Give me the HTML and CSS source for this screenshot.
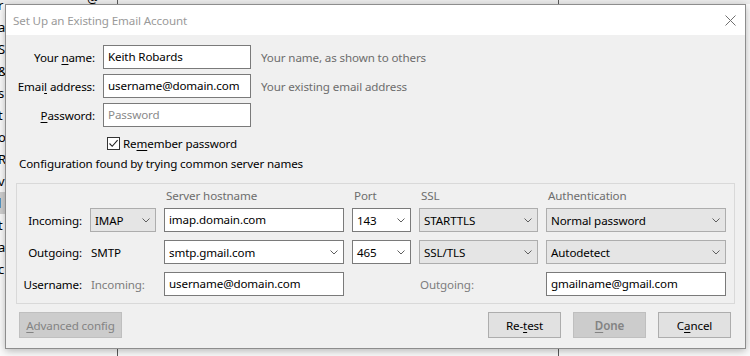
FILE: index.html
```html
<!DOCTYPE html>
<html lang="en">
<head>
    <meta charset="UTF-8">
    <title>Set Up an Existing Email Account</title>
    <link rel="stylesheet" href="styles.css">
</head>
<body>
    <!-- the mail window behind the dialog -->
    <div class="backdrop">
        <div class="folder-list">
            <span>r</span><span>a</span><span>Se</span><span>&amp;</span><span>s</span><span>t</span><span>o</span>
            <span>R</span><span>v</span><span class="sel">l</span><span>t</span><span>a</span><span>c</span>
        </div>
        <span class="back-glyph">@</span>
        <div class="splitter left"></div>
        <div class="splitter right"></div>
    </div>

    <div class="dialog">
        <div class="titlebar">
            <span>Set Up an Existing Email Account</span>
            <svg class="close" width="11" height="11" viewBox="0 0 11 11">
                <path d="M0.5 0.5 L10.5 10.5 M10.5 0.5 L0.5 10.5" stroke="#6f6f6f" stroke-width="1" fill="none"/>
            </svg>
        </div>

        <div class="dlg-body">
            <div class="account">
                <span class="lbl">Your <u>n</u>ame:</span>
                <div class="field">Keith Robards</div>
                <span class="hint">Your name, as shown to others</span>

                <span class="lbl">Emai<u>l</u> address:</span>
                <div class="field">username@domain.com</div>
                <span class="hint">Your existing email address</span>

                <span class="lbl"><u>P</u>assword:</span>
                <div class="field placeholder">Password</div>
                <span></span>
            </div>

            <div class="remember">
                <span class="check">
                    <svg width="11" height="11" viewBox="0 0 11 11">
                        <path d="M1.5 5.5 L4.2 8.3 L9.6 2.2" stroke="#222" stroke-width="1.1" fill="none"/>
                    </svg>
                </span>
                Re<u>m</u>ember password
            </div>

            <p class="status">Configuration found by trying common server names</p>

            <div class="servers">
                <div class="srv-grid srv-head">
                    <span></span><span></span>
                    <span>Server hostname</span>
                    <span>Port</span>
                    <span>SSL</span>
                    <span>Authentication</span>
                </div>
                <div class="srv-grid srv-rows">
                    <span class="lbl">Incoming:</span>
                    <div class="combo">IMAP <svg class="chev" width="8" height="5" viewBox="0 0 8 5"><path d="M0.5 0.5 L4 4 L7.5 0.5" /></svg></div>
                    <div class="field">imap.domain.com</div>
                    <div class="combo edit">143 <svg class="chev" width="8" height="5" viewBox="0 0 8 5"><path d="M0.5 0.5 L4 4 L7.5 0.5" /></svg></div>
                    <div class="combo">STARTTLS <svg class="chev" width="8" height="5" viewBox="0 0 8 5"><path d="M0.5 0.5 L4 4 L7.5 0.5" /></svg></div>
                    <div class="combo">Normal password <svg class="chev" width="8" height="5" viewBox="0 0 8 5"><path d="M0.5 0.5 L4 4 L7.5 0.5" /></svg></div>

                    <span class="lbl">Outgoing:</span>
                    <span class="plain">SMTP</span>
                    <div class="combo edit">smtp.gmail.com <svg class="chev" width="8" height="5" viewBox="0 0 8 5"><path d="M0.5 0.5 L4 4 L7.5 0.5" /></svg></div>
                    <div class="combo edit">465 <svg class="chev" width="8" height="5" viewBox="0 0 8 5"><path d="M0.5 0.5 L4 4 L7.5 0.5" /></svg></div>
                    <div class="combo">SSL/TLS <svg class="chev" width="8" height="5" viewBox="0 0 8 5"><path d="M0.5 0.5 L4 4 L7.5 0.5" /></svg></div>
                    <div class="combo">Autodetect <svg class="chev" width="8" height="5" viewBox="0 0 8 5"><path d="M0.5 0.5 L4 4 L7.5 0.5" /></svg></div>

                    <span class="lbl">Username:</span>
                    <span class="plain dim">Incoming:</span>
                    <div class="field">username@domain.com</div>
                    <span></span>
                    <span class="plain dim">Outgoing:</span>
                    <div class="field">gmailname@gmail.com</div>
                </div>
            </div>

            <div class="actions">
                <div class="btn adv disabled"><u>A</u>dvanced config</div>
                <div class="btn">Re-<u>t</u>est</div>
                <div class="btn disabled bold"><u>D</u>one</div>
                <div class="btn">C<u>a</u>ncel</div>
            </div>
        </div>
    </div>
</body>
</html>
```

FILE: styles.css
```css
body {
    margin: 0;
    width: 750px;
    height: 356px;
    overflow: hidden;
    position: relative;
    background-color: #f7f7f7;
    font-family: "Noto Sans", sans-serif;
    font-size: 11.6px;
    letter-spacing: -0.12px;
    color: #000;
}
u {
    text-underline-offset: 2px;
}

/* background window */
.backdrop {
    position: absolute;
    inset: 0;
    background: linear-gradient(#ececec 0, #ececec 4px, #fbfbfb 4px);
}
.folder-list {
    position: absolute;
    left: -2px;
    top: -6px;
    display: flex;
    flex-direction: column;
    line-height: 22px;
    font-size: 13px;
}
.folder-list .sel {
    background-color: #d0d0d0;
    padding-right: 10px;
}
.back-glyph {
    position: absolute;
    left: 87px;
    top: -11px;
    font-size: 13px;
}
.splitter {
    position: absolute;
    top: 0;
    bottom: 0;
    width: 1px;
    background-color: #5a5a5a;
}
.splitter.left { left: 117px; }
.splitter.right { left: 558px; }

/* dialog window */
.dialog {
    position: absolute;
    left: 5px;
    top: 4px;
    width: 739px;
    border: 1px solid #8d8d8d;
    background-color: #f0f0f0;
    box-shadow: 0 2px 8px rgba(0,0,0,0.28);
}
.titlebar {
    height: 30px;
    background-color: #fff;
    display: flex;
    align-items: center;
    justify-content: space-between;
    padding: 0 9px 0 7px;
    color: #9a9a9a;
}
.dlg-body {
    padding: 10px 0 10px;
}

.account {
    display: grid;
    grid-template-columns: 89px 148px 1fr;
    grid-auto-rows: 24px;
    column-gap: 8px;
    row-gap: 5px;
    align-items: center;
}
.lbl {
    text-align: right;
}
.field {
    height: 24px;
    box-sizing: border-box;
    border: 1px solid #7a7a7a;
    background-color: #fff;
    padding: 0 4px;
    line-height: 22px;
    white-space: nowrap;
    overflow: hidden;
}
.field.placeholder {
    color: #8a8a8a;
}
.hint {
    color: #6d6d6d;
    padding-left: 2px;
}

.remember {
    display: flex;
    align-items: center;
    height: 16px;
    margin: 8px 0 0 101px;
}
.check {
    width: 13px;
    height: 13px;
    box-sizing: border-box;
    border: 1px solid #333;
    background-color: #fff;
    display: flex;
    align-items: center;
    justify-content: center;
    margin-right: 3px;
}
.status {
    margin: 5px 0 0 13px;
    line-height: 16px;
}

.servers {
    margin: 11px 10px 0;
    border: 1px solid #d9d9d9;
    padding: 4px 6px 7px 0;
}
.srv-grid {
    display: grid;
    grid-template-columns: 65px 66px 180px 59px 119px 180px;
    column-gap: 8px;
}
.srv-head {
    height: 16px;
    line-height: 16px;
    color: #6d6d6d;
    margin-bottom: 4px;
}
.srv-head span {
    padding-left: 2px;
}
.srv-rows {
    grid-auto-rows: 24px;
    row-gap: 8px;
    align-items: center;
}
.plain {
    padding-left: 1px;
}
.plain.dim {
    color: #7d7d7d;
}
.combo {
    height: 24px;
    box-sizing: border-box;
    border: 1px solid #adadad;
    background-color: #e5e5e5;
    display: flex;
    align-items: center;
    justify-content: space-between;
    padding: 0 5px 0 4px;
    white-space: nowrap;
}
.combo.edit {
    background-color: #fff;
    border-color: #7a7a7a;
}
.chev path {
    stroke: #5f5f5f;
    stroke-width: 1;
    fill: none;
}

.actions {
    display: flex;
    gap: 12px;
    margin: 8px 14px 0 13px;
}
.btn {
    width: 73px;
    height: 26px;
    box-sizing: border-box;
    border: 1px solid #adadad;
    background-color: #e1e1e1;
    display: flex;
    align-items: center;
    justify-content: center;
}
.btn.adv {
    width: 103px;
    margin-right: auto;
}
.btn.disabled {
    background-color: #cccccc;
    border-color: #bfbfbf;
    color: #838383;
}
.btn.bold {
    font-weight: 600;
}
```
